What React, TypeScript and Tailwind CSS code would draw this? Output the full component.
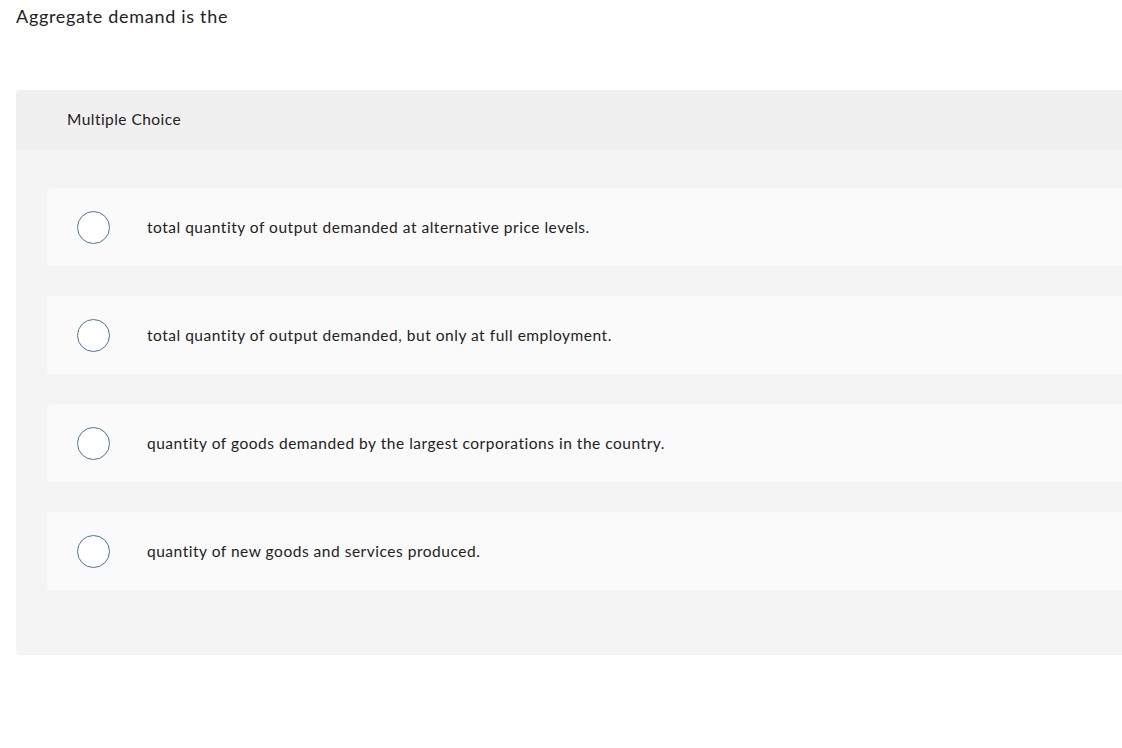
const OPTIONS = [
  "total quantity of output demanded at alternative price levels.",
  "total quantity of output demanded, but only at full employment.",
  "quantity of goods demanded by the largest corporations in the country.",
  "quantity of new goods and services produced.",
]

export default function App() {
  return (
    <div
      className="w-[1122px] h-[748px] overflow-hidden bg-white text-[#222]"
      style={{ fontFamily: "Lato, 'Open Sans', sans-serif" }}
    >
      <p className="pl-4 pt-[4px] text-[18px] leading-[24px] tracking-[0.7px]">Aggregate demand is the</p>

      <div className="ml-4 mt-[62px] w-[1130px] rounded-l-[4px] overflow-hidden">
        <div className="h-[60px] bg-[#f0f0f0] pl-[51px] flex items-center text-[15.5px] tracking-[0.45px]">
          Multiple Choice
        </div>
        <div className="bg-[#f4f4f4] pl-[31px] pt-[38px] pb-[65px] flex flex-col gap-[30px]">
          {OPTIONS.map((o) => (
            <div key={o} className="h-[78px] bg-[#fafafa] rounded-l-[4px] flex items-center pl-[30px]">
              <span className="w-[33px] h-[33px] rounded-full border-[1.5px] border-[#4a74a0] bg-white shrink-0" />
              <span className="ml-[37px] pt-[2px] text-[15.5px] tracking-[0.52px]">{o}</span>
            </div>
          ))}
        </div>
      </div>
    </div>
  )
}
